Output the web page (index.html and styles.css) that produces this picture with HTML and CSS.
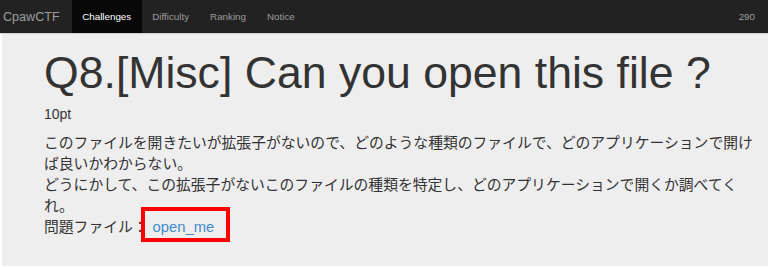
FILE: index.html
```html
<!DOCTYPE html>
<html lang="ja">
<head>
<meta charset="utf-8">
<title>CpawCTF</title>
<link rel="stylesheet" href="styles.css">
</head>
<body>
<nav class="navbar">
  <a class="brand" href="#">CpawCTF</a>
  <ul class="nav">
    <li class="active"><a href="#">Challenges</a></li>
    <li><a href="#">Difficulty</a></li>
    <li><a href="#">Ranking</a></li>
    <li><a href="#">Notice</a></li>
  </ul>
  <span class="score">290</span>
</nav>
<main class="jumbotron">
  <h1 class="title">Q8.[Misc] Can you open this file ?</h1>
  <div class="points">10pt</div>
  <p class="desc">このファイルを開きたいが拡張子がないので、どのような種類のファイルで、どのアプリケーションで開けば良いかわからない。<br>どうにかして、この拡張子がないこのファイルの種類を特定し、どのアプリケーションで開くか調べてくれ。<br>問題ファイル：<a class="file" href="#">open_me</a></p>
</main>
</body>
</html>
```

FILE: styles.css
```css
html, body {
  margin: 0;
  padding: 0;
  background: #fff;
  font-family: "Liberation Sans", Arial, "Noto Sans CJK JP", sans-serif;
  color: #333;
}

.navbar {
  display: flex;
  align-items: stretch;
  height: 33px;
  background: #222;
  border-bottom: 1px solid #cfcfcf;
  box-sizing: content-box;
}

.brand {
  display: flex;
  align-items: center;
  padding: 0 12px 0 3px;
  font-size: 12.6px;
  color: #9d9d9d;
  text-decoration: none;
}

.nav {
  display: flex;
  list-style: none;
  margin: 0;
  padding: 0;
}

.nav li {
  display: flex;
}

.nav a {
  display: flex;
  align-items: center;
  padding: 0 10.5px;
  font-size: 9.8px;
  color: #9d9d9d;
  text-decoration: none;
}

.nav li.active a {
  background: #080808;
  color: #fff;
}

.score {
  margin-left: auto;
  display: flex;
  align-items: center;
  padding-right: 13px;
  font-size: 9.8px;
  color: #9d9d9d;
}

.jumbotron {
  margin-left: 2px;
  background: #eee;
  padding: 14px 10px 28px 42px;
  min-height: 190px;
}

.title {
  margin: 0;
  font-size: 44.6px;
  font-weight: 400;
  line-height: 1.1;
  color: #333;
}

.points {
  margin-top: 7px;
  font-size: 14px;
  line-height: 20px;
}

.desc {
  margin: 9px 0 0;
  font-family: "Liberation Sans", "Noto Sans CJK JP", sans-serif;
  font-size: 14.8px;
  line-height: 21px;
}

.file {
  position: relative;
  display: inline-block;
  margin-left: 5px;
  line-height: 21px;
  color: #428bca;
  text-decoration: none;
}

.file::after {
  content: "";
  position: absolute;
  top: -10px;
  left: -12px;
  width: 89px;
  height: 35px;
  box-sizing: border-box;
  border: 4px solid #f00;
}
```
